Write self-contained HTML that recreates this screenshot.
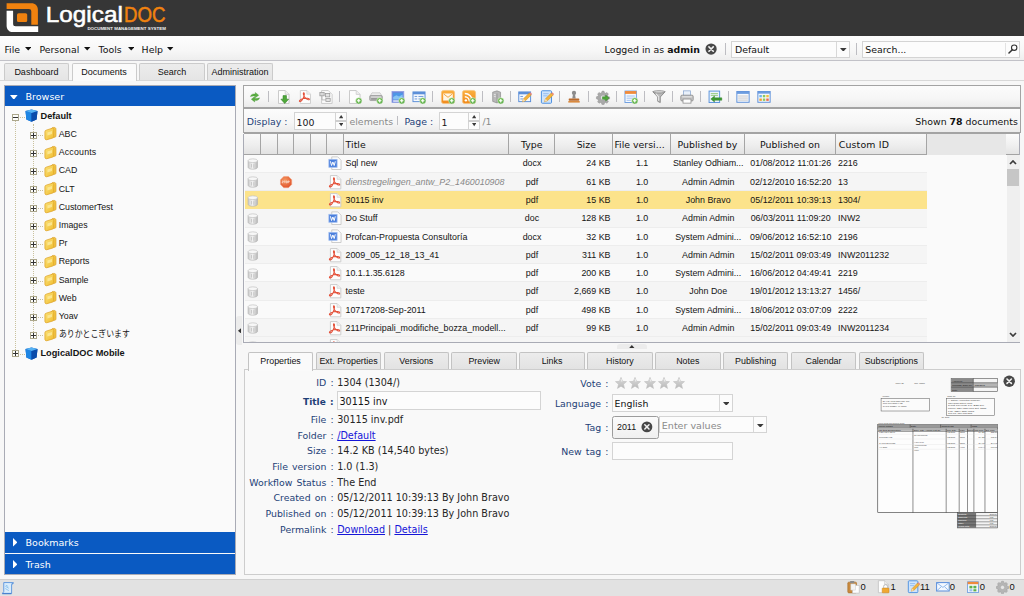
<!DOCTYPE html>
<html lang="en">
<head>
<meta charset="utf-8">
<title>LogicalDOC</title>
<style>
html,body{margin:0;padding:0;width:1024px;height:596px;overflow:hidden;background:#f7f7f7}
body{font-family:"Liberation Sans","Noto Sans CJK JP",sans-serif;font-size:8.9px;color:#141414;position:relative;line-height:1}
.v{font-family:"DejaVu Sans","Liberation Sans",sans-serif;font-size:9.4px}
.a{position:absolute;box-sizing:border-box}
svg{display:block}
svg.ic{position:absolute;width:13px;height:13px;overflow:visible}
/* header */
#hdr{left:0;top:0;width:1024px;height:37px;background:#363636;border-bottom:1px solid #b4b4b4}
#menubar{left:0;top:36.3px;width:1024px;height:24.4px;background:linear-gradient(#fdfdfd,#f7f7f7 60%,#eeeeee);border-bottom:1px solid #c2c2c8}
.mi{position:absolute;top:44.6px;white-space:nowrap;color:#111}
.tri{position:absolute;width:0;height:0;border-left:3.2px solid transparent;border-right:3.2px solid transparent;border-top:3.7px solid #111;top:47px}
/* top tabs */
.tab{position:absolute;box-sizing:border-box;top:63.4px;height:17px;border:1px solid #cbcbcb;border-bottom:none;border-radius:2px 2px 0 0;background:linear-gradient(#ececec,#e5e5e5);text-align:center;line-height:17px;font-size:9px;color:#111}
.tab.on{background:#fafafa;height:18px;z-index:2}
#tabline{left:0;top:80.2px;width:1024px;height:1px;background:#d8d8d8}
/* left panel */
#left{left:4px;top:85px;width:232px;height:490px;border:1px solid #a9abb5;background:#fafafa}
.sec{position:absolute;left:0;width:230px;background:#0a5ac2;color:#fff;height:20.4px}
.sec span{position:absolute;left:20.6px;top:6px;font-size:9.5px}
.tr{position:absolute;white-space:nowrap;font-size:8.8px}
.tr b{font-weight:bold;font-size:9.2px}
.sx{display:inline-block;transform:scaleX(.895);transform-origin:0 50%}
/* right */
.bar{border:1px solid #a3a3a3;background:linear-gradient(#fcfcfc,#f6f6f6 60%,#ebebeb)}
.sep{position:absolute;width:1px;background:#bdbdc2;height:11px;top:5.5px}
.blue{color:#1e3f77}
/* grid */
#ghead{left:244px;top:133px;width:776px;height:21.6px;border-top:1px solid #a3a3a3}
.hc{position:absolute;top:0;height:20.6px;border-right:1px solid #a5a5a5;border-bottom:1px solid #a3a3a3;background:linear-gradient(#f8f8f8,#eeeeee 55%,#e2e2e2);box-sizing:border-box;line-height:22px;white-space:nowrap;overflow:hidden;color:#111}
.row{position:absolute;left:244.5px;width:682.5px;height:18.27px;box-sizing:border-box;border-bottom:1px solid #ededed;background:#fafafa}
.row.sel{background:#fce38b;border-bottom-color:#fce38b}
.row.imm .t{color:#888;font-style:italic}
.row .c{position:absolute;top:4.9px;white-space:nowrap}
.row .db{left:2px;top:3.4px;width:11.8px;height:11.8px}
.row .st{left:35.2px;top:3.4px;width:12.2px;height:12.2px}
.row .fi{left:83.2px;top:1.8px;width:14.4px;height:14.4px}
.c.t{left:101px}
.c.ty{left:264.5px;width:46px;text-align:center}
.c.sz{left:310px;width:56px;text-align:right}
.c.fv{left:368.6px;width:58px;text-align:center}
.c.pb{left:426.7px;width:74px;text-align:center}
.c.po{left:500.7px;width:91px;text-align:center}
.c.ci{left:593.5px}
/* bottom tabs */
.bt{position:absolute;box-sizing:border-box;top:352px;height:17.5px;width:65.6px;border:1px solid #c3c3c3;border-bottom:none;border-radius:2px 2px 0 0;background:linear-gradient(#ececec,#e2e2e2);text-align:center;line-height:17px;color:#111}
.bt.on{background:#fafafa;height:18.5px;z-index:2}
#bpane{left:243.6px;top:369.4px;width:777px;height:206px;border:1px solid #cdcdcd;background:#f9f9f9}
.fl{position:absolute;width:90px;text-align:right;white-space:nowrap;color:#1e3f77;font-size:9.38px;word-spacing:1.1px}
.fl b{font-size:9px}
.fv2{position:absolute;white-space:nowrap;color:#262626;font-size:9.65px}
.inp{position:absolute;box-sizing:border-box;border:1px solid #d4d4d4;background:#fcfcfc}
a{color:#1515d8;text-decoration:underline}

.sec i.dn{position:absolute;left:5.2px;top:8.6px;border-left:3.8px solid transparent;border-right:3.8px solid transparent;border-top:4.6px solid #fff}
.sec i.rt{position:absolute;left:7.6px;top:6px;border-top:4.2px solid transparent;border-bottom:4.2px solid transparent;border-left:4.4px solid #fff}
.vdot{position:absolute;width:0;border-left:1px dotted #c9c19c}
.hdot{position:absolute;height:0;border-top:1px dotted #c9c19c}
.op{position:absolute;width:7px;height:7px;box-sizing:border-box;border:1px solid #aca78c;background:#fdfdfa}
.op i.h{position:absolute;left:0;top:2px;width:5px;height:1px;background:#333}
.op i.vv{position:absolute;left:2px;top:0;width:1px;height:5px;background:#333}
.row.alt{background:#f5f5f5}
.spb{position:absolute;right:0;top:0;bottom:0;width:12px;border-left:1px solid #d6d6d6}
.up{position:absolute;right:3.1px;top:2.2px;border-left:2.3px solid transparent;border-right:2.3px solid transparent;border-bottom:3.2px solid #333}
.dw{position:absolute;right:3.1px;bottom:2.2px;border-left:2.3px solid transparent;border-right:2.3px solid transparent;border-top:3.2px solid #333}
.spb:after{content:"";position:absolute;left:0;right:0;top:7.4px;height:1.4px;background:#d0d0d0}
.cbb{position:absolute;right:0;top:0;bottom:0;width:13.6px;border-left:1px solid #dcdcdc}
.cba{position:absolute;right:3.2px;top:6px;border-left:3.5px solid transparent;border-right:3.5px solid transparent;border-top:3.8px solid #333}
/* status */
#status{left:0;top:578.6px;width:1024px;height:17.4px;background:#e2e2e2;border-top:1px solid #d0d0d0}
.sn{position:absolute;top:582.2px;font-size:9.4px;color:#111}
</style>
</head>
<body>
<svg width="0" height="0" style="position:absolute">
<defs>
<linearGradient id="g-cyl" x1="0" x2="1" y1="0" y2="0"><stop offset="0" stop-color="#c9c9c9"/><stop offset=".45" stop-color="#f4f4f4"/><stop offset="1" stop-color="#b5b5b5"/></linearGradient>
<linearGradient id="g-fold" x1="0" x2="1" y1="0" y2="1"><stop offset="0" stop-color="#fbe27a"/><stop offset="1" stop-color="#f0bd30"/></linearGradient>
<linearGradient id="g-cubeL" x1="0" x2="1" y1="0" y2="1"><stop offset="0" stop-color="#3aa0ee"/><stop offset="1" stop-color="#0d55b8"/></linearGradient>
<radialGradient id="g-stop" cx=".4" cy=".35" r=".7"><stop offset="0" stop-color="#f59a63"/><stop offset="1" stop-color="#e0522a"/></radialGradient>
<radialGradient id="g-plus" cx=".4" cy=".35" r=".7"><stop offset="0" stop-color="#8fd36a"/><stop offset="1" stop-color="#3c9a2c"/></radialGradient>
<linearGradient id="g-or" x1="0" x2="0" y1="0" y2="1"><stop offset="0" stop-color="#fbb040"/><stop offset="1" stop-color="#f08a1d"/></linearGradient>
<linearGradient id="g-star" x1="0" x2="0" y1="0" y2="1"><stop offset="0" stop-color="#dcdcdc"/><stop offset="1" stop-color="#b9b9b9"/></linearGradient>
<g id="plus"><circle cx="10" cy="10" r="2.900" fill="url(#g-plus)" stroke="#e2f2d8" stroke-width=".5"/><path d="M8.400 10h3.200M10 8.400v3.200" stroke="#fff" stroke-width="1.100"/></g>
<g id="page"><path d="M1.400 .5h6.200l3.600 3.600v8.400H1.400z" fill="#fdfdfd" stroke="#c2c2c2" stroke-width=".8"/><path d="M7.600 .5v3.600h3.600" fill="#efefef" stroke="#c2c2c2" stroke-width=".6"/></g>
<g id="i-db"><path d="M1.2 3v7.2c0 1.3 2.3 2.2 5.2 2.2s5.2-.9 5.2-2.2V3z" fill="url(#g-cyl)" stroke="#b3b3b3" stroke-width=".7"/><ellipse cx="6.4" cy="3" rx="5.2" ry="2.1" fill="#f7f7f7" stroke="#bdbdbd" stroke-width=".7"/><path d="M5 6.5v4M7.5 6.8v4" stroke="#bbb" stroke-width=".8"/></g>
<g id="i-stop"><path d="M4 .5h5L12.5 4v5L9 12.5H4L.5 9V4z" fill="url(#g-stop)" stroke="#f2a27e" stroke-width=".6"/><path d="M2.3 5.3h1.2v1H2.3v1h1.2M4.4 5.3h1.4M5.1 5.3v2.3M6.5 5.3h1.2v2H6.5zM8.6 7.6V5.3h1.2v1.1H8.6" fill="none" stroke="#fde9dd" stroke-width=".7"/></g>
<g id="i-word"><path d="M3.4 .8h5.4l3 3v8.4H3.4z" fill="#fdfdfd" stroke="#c6c6c6" stroke-width=".8"/><rect x=".8" y="3" width="7.4" height="7.2" fill="#4a7fdc" stroke="#9fbdf0" stroke-width=".7"/><path d="M2.2 4.8l1 3.8 1.2-3.2 1.2 3.2 1-3.8" fill="none" stroke="#fff" stroke-width=".9"/></g>
<g id="i-pdf"><path d="M2.200 .5h6l3.400 3.400v8.600H2.200z" fill="#fdfdfd" stroke="#c9c9c9" stroke-width=".8"/><path d="M8.200 .5v3.400h3.400" fill="#f0f0f0" stroke="#c9c9c9" stroke-width=".5"/><path d="M5.3 2.6c.9 0 .7 2.4-.3 4.6C4 9.400 2.400 11 1.500 10.600c-.8-.5.700-2 3.500-2.600s5.600-.3 5.600.7c0 .9-2.500.2-4-1.500S4.500 2.600 5.300 2.600z" fill="none" stroke="#e4513a" stroke-width=".95" stroke-linejoin="round"/></g>
<g id="i-folder"><path d="M7.200 2.400c.2-1.600 1.200-2 2.600-2 1.500 0 2.200.6 2.200 2v7.200l-2.200 1z" fill="#f3c748" stroke="#d79a1e" stroke-width=".6"/><path d="M.9 4.800c0-.9.400-1.300 1.200-1.600l6.200-2c.9-.3 1.500.2 1.500 1.100v7.400c0 .7-.3 1.100-1 1.300l-5.800 1.700c-1.200.3-2.100-.3-2.100-1.500z" fill="url(#g-fold)" stroke="#dc9f1f" stroke-width=".7"/><path d="M3.400 5.400l4.600-1.500v3.200l-4.600 1.400z" fill="#fdf0a8" opacity=".7"/></g>
<g id="i-cube"><path d="M6.500 .4l6 1.700-.9 8.400-5.100 2.300-5.100-2.300L.5 2.100z" fill="#0d59bd"/><path d="M.5 2.100l6 1.800v8.900l-5.100-2.300z" fill="#1f86e4"/><path d="M6.500 3.900l6-1.800-.9 8.400-5.100 2.300z" fill="#0b4cab"/><path d="M.5 2.100l6-1.700 6 1.700-6 1.800z" fill="#55b2f4"/></g>
<g id="i-close"><circle cx="6.500" cy="6.500" r="6" fill="#484848"/><path d="M4.200 4.200l4.600 4.600M8.800 4.200l-4.600 4.600" stroke="#f2f2f2" stroke-width="1.700" stroke-linecap="round"/></g>
<g id="i-star"><path d="M6.500 .4l1.700 4.300 4.300.3-3.300 2.900 1.100 4.500-3.800-2.500-3.800 2.500 1.100-4.500L.5 5l4.300-.3z" fill="url(#g-star)" stroke="#bdbdbd" stroke-width=".6"/><path d="M6.500 2.200l1 2.900" stroke="#f4f4f4" stroke-width=".8" fill="none"/></g>
<g id="t-refresh" transform="translate(1.300 1.500) scale(.8)"><path d="M1.200 5.800C1.800 3.200 4 2.300 6.800 2.900V1l4 3.200-4 3V5.200C4.600 4.800 3.200 5 1.200 5.800z" fill="#5cb043" stroke="#3f8f2c" stroke-width=".4"/><path d="M11.800 7.200C11.200 9.800 9 10.700 6.200 10.100V12l-4-3.200 4-3V7.800C8.400 8.200 9.800 8 11.800 7.200z" fill="#5cb043" stroke="#3f8f2c" stroke-width=".4"/></g>
<g id="t-down"><use href="#page"/><path d="M5.600 5.200h3.200v3.300h2L7.200 12.600 3.600 8.500h2z" fill="#4fa83a" stroke="#2f7d22" stroke-width=".5"/></g>
<g id="t-copy"><path d="M2.400 .5h6.200l3.600 3.600v8.400H2.400z" fill="#fbfbfb" stroke="#c6c6c6" stroke-width=".8"/><rect x=".8" y="2.200" width="4" height="3.200" fill="#d9d9d9" stroke="#9a9a9a" stroke-width=".7"/><rect x="6" y="3.200" width="4" height="3.200" fill="#e4e4e4" stroke="#9a9a9a" stroke-width=".7"/><rect x="6.400" y="7.800" width="4" height="2.800" fill="#e4e4e4" stroke="#9a9a9a" stroke-width=".7"/><path d="M2.800 5.400v3.800h3.600" fill="none" stroke="#aaa" stroke-width=".7"/></g>
<g id="t-newdoc"><use href="#page"/><use href="#plus"/></g>
<g id="t-scan"><path d="M1.200 5.200l1.600-2.600h7.400l1.600 2.600z" fill="#ededed" stroke="#b0b0b0" stroke-width=".5"/><rect x=".6" y="5.200" width="11.800" height="4.600" rx=".9" fill="#b9b9b9" stroke="#8f8f8f" stroke-width=".6"/><path d="M1.800 6.500h9.400" stroke="#e6e6e6" stroke-width=".9"/><path d="M2 8.300h7" stroke="#777" stroke-width=".8"/><use href="#plus"/></g>
<g id="t-win"><rect x=".9" y="1.300" width="11" height="10.400" fill="#6d86da" stroke="#8f9fe4" stroke-width=".7"/><rect x="2" y="2.600" width="8.800" height="6.200" fill="#4d97e6"/><path d="M2 6.400l3-1.500 2.500 1.200 3.300-1.900v4.600H2z" fill="#86c4f4"/><rect x="2" y="9.600" width="8.800" height="1.300" fill="#e8eefb"/><use href="#plus"/></g>
<g id="t-form"><rect x=".9" y="1.800" width="11.200" height="9" fill="#f4f8fd" stroke="#5c8fd8" stroke-width=".9"/><rect x=".9" y="1.800" width="11.200" height="2.200" fill="#5c8fd8"/><path d="M2.400 6h2.400M6 6h4.600M2.400 8.300h2.400M6 8.300h3" stroke="#6f9ad8" stroke-width=".9"/><use href="#plus"/></g>
<g id="t-mail"><rect x=".4" y=".4" width="12.200" height="12.200" rx="2" fill="url(#g-or)" stroke="#f6c37c" stroke-width=".7"/><rect x="2.400" y="3.600" width="8.200" height="5.800" fill="#fff6e6" stroke="#fff" stroke-width=".5"/><path d="M2.400 3.600l4.100 3.200 4.100-3.200" fill="none" stroke="#f09a2b" stroke-width=".8"/><use href="#plus"/></g>
<g id="t-rss"><rect x=".4" y=".4" width="12.200" height="12.200" rx="2" fill="url(#g-or)" stroke="#f6c37c" stroke-width=".7"/><circle cx="3.600" cy="9.600" r="1.100" fill="#fff"/><path d="M2.600 6.200a4.200 4.200 0 0 1 4.200 4.200M2.600 3.300a7.100 7.100 0 0 1 7.100 7.100" fill="none" stroke="#fff" stroke-width="1.300"/><use href="#plus"/></g>
<g id="t-server"><path d="M2.500 2l4-1.200 3.300 1.200v8.600l-3.300 1.400-4-1.400z" fill="#b9b9b9" stroke="#858585" stroke-width=".6"/><path d="M6.500 3.200v8.800" stroke="#8d8d8d" stroke-width=".6"/><path d="M3.500 4l2 .5M3.500 5.800l2 .5" stroke="#eee" stroke-width=".7"/><use href="#plus"/></g>
<g id="pencil"><path d="M4.200 10.900l.9-2.700 5.400-5.400 1.800 1.800-5.400 5.400z" fill="#f3b33d" stroke="#c98a1e" stroke-width=".5"/><path d="M4.200 10.900l.9-2.700 1.800 1.800z" fill="#f6deb4"/><path d="M10.500 2.800l.8-.8 1.800 1.800-.8.800z" fill="#e98080"/></g>
<g id="t-formedit"><rect x=".7" y="1.800" width="11" height="9" fill="#f4f8fd" stroke="#5c8fd8" stroke-width=".9"/><rect x=".7" y="1.800" width="11" height="2.200" fill="#5c8fd8"/><path d="M2.200 6h2.400M2.200 8.300h2.400" stroke="#6f9ad8" stroke-width=".9"/><use href="#pencil"/></g>
<g id="t-docedit"><rect x="1.300" y=".7" width="9.400" height="11.600" rx=".8" fill="#cfe4fb" stroke="#4b8fe0" stroke-width=".9"/><path d="M3 3.400h5M3 5.400h4" stroke="#8db8ee" stroke-width=".8"/><use href="#pencil"/></g>
<g id="t-stamp"><circle cx="6.500" cy="2.800" r="2" fill="#8c8c8c"/><path d="M5.500 4.300h2l.6 3.700H4.900z" fill="#8c8c8c"/><rect x="1.600" y="7.800" width="9.800" height="2.200" rx=".6" fill="#b96a2c"/><rect x="1.200" y="10.200" width="10.600" height="1.500" fill="#d98a3f"/></g>
<g id="t-gear"><path d="M6.500 1l1 .1.400 1.400 1 .5 1.300-.7 1.300 1.400-.7 1.300.4 1 1.400.4v1.900l-1.400.4-.4 1 .7 1.300-1.400 1.300-1.200-.7-1 .4-.4 1.400H5.500l-.4-1.400-1-.4-1.300.7-1.300-1.400.7-1.200-.5-1L.4 8.200V6.300l1.400-.4.400-1-.7-1.300 1.400-1.300 1.200.7 1-.5.500-1.400z" fill="#a9a9a9" stroke="#8a8a8a" stroke-width=".4"/><circle cx="6.500" cy="7.200" r="2" fill="#e9e9e9"/><path d="M6 6.300h3v-1.600l3.200 2.800L9 10.300V8.700H6z" fill="#4fa83a" stroke="#2f7d22" stroke-width=".4"/></g>
<g id="t-cal"><rect x=".9" y="1" width="10.600" height="10.600" fill="#f7fafe" stroke="#6f9fe0" stroke-width=".9"/><rect x=".9" y="1" width="10.600" height="2.600" fill="#f08a3a"/><path d="M2.400 5.600h7.600M2.400 7.600h7.600M2.400 9.600h4" stroke="#9ec0ee" stroke-width=".9"/><use href="#plus"/></g>
<g id="t-funnel"><path d="M.8 1.600h11.400L7.700 6.500v5.200l-2.400-1.200V6.500z" fill="#b9b9b9" stroke="#7a7a7a" stroke-width=".7"/><path d="M3.600 3.400l2.600 3v3.600" stroke="#ececec" stroke-width="1" fill="none"/><ellipse cx="6.500" cy="1.700" rx="5.600" ry="1.100" fill="#d9d9d9" stroke="#777" stroke-width=".6"/></g>
<g id="t-print"><rect x="3.200" y=".8" width="6.600" height="4.600" fill="#e9f1fb" stroke="#8aa7d0" stroke-width=".7"/><rect x=".7" y="4.800" width="11.600" height="5.400" rx="1.200" fill="#c4c4c4" stroke="#8a8a8a" stroke-width=".7"/><rect x="2.800" y="8.400" width="7.400" height="3.800" fill="#fdfdfd" stroke="#8a8a8a" stroke-width=".7"/><path d="M2 6.300h9" stroke="#eee" stroke-width=".8"/></g>
<g id="t-export"><rect x="1" y="1" width="9.800" height="10.600" fill="#eaf3fd" stroke="#5c94dc" stroke-width=".9"/><path d="M2.600 3.200h6.600M2.600 5h6.600" stroke="#9fd08f" stroke-width="1"/><path d="M12.800 7.300H6V5.600L2.600 8.400 6 11.200V9.500h6.800z" fill="#3e9a33" stroke="#2a7a22" stroke-width=".4"/></g>
<g id="t-list"><rect x=".8" y="1.400" width="11.400" height="10" fill="#f6f9fe" stroke="#5c8fd8" stroke-width=".9"/><rect x=".8" y="1.400" width="11.400" height="2.200" fill="#6c9ce0"/><path d="M2 5.600h9M2 7.500h9M2 9.400h9" stroke="#c9c9c9" stroke-width=".9"/></g>
<g id="t-gallery"><rect x=".8" y="1.400" width="11.400" height="10" fill="#f6f9fe" stroke="#5c8fd8" stroke-width=".9"/><rect x=".8" y="1.400" width="11.400" height="2" fill="#6c9ce0"/><rect x="2.200" y="4.600" width="2.300" height="2.200" fill="#6fb6e8"/><rect x="5.400" y="4.600" width="2.300" height="2.200" fill="#8cc860"/><rect x="8.600" y="4.600" width="2.300" height="2.200" fill="#f0c040"/><rect x="2.200" y="7.900" width="2.300" height="2.200" fill="#f0a030"/><rect x="5.400" y="7.900" width="2.300" height="2.200" fill="#8cc860"/><rect x="8.600" y="7.900" width="2.300" height="2.200" fill="#e86a50"/></g>

</defs>
</svg>

<!-- HEADER -->
<div id="hdr" class="a">
<svg class="a" style="left:0;top:0" width="180" height="36" viewBox="0 0 180 36">
<path d="M6.600 3.300h24.800c3.800 0 6.500 2.600 6.500 6.400v15h-6.600V11.600c0-1.700-.8-2.500-2.500-2.500H6.600z" fill="#f0820f"/>
<path d="M6.600 10.800h6.500v12.900c0 1.700.8 2.500 2.500 2.500h22.600v5.900H13c-3.800 0-6.400-2.600-6.400-6.400z" fill="#fff"/>
<rect x="17" y="13.200" width="10.200" height="8.800" rx="1.600" fill="#f0820f"/>
<text x="45.800" y="22" font-family="Liberation Sans, sans-serif" font-size="22.600" fill="#fff" stroke="#fff" stroke-width=".55" textLength="77" lengthAdjust="spacingAndGlyphs">Logical</text>
<text x="124" y="22" font-family="Liberation Sans, sans-serif" font-size="22.600" fill="#f0820f" stroke="#f0820f" stroke-width=".55" textLength="41.500" lengthAdjust="spacingAndGlyphs">DOC</text>
<text x="87.400" y="29.700" font-family="Liberation Sans, sans-serif" font-size="3.900" font-weight="bold" fill="#f2f2f2" textLength="78.500" lengthAdjust="spacingAndGlyphs">DOCUMENT MANAGEMENT SYSTEM</text>
</svg>

</div>

<!-- MENUBAR -->
<div id="menubar" class="a"></div>
<div class="mi v" style="left:4.4px">File</div><svg class="a" style="left:24.8px;top:47.2px;" width="6.4" height="3.6" viewBox="0 0 10 10" preserveAspectRatio="none"><path d="M0 0h10L5 10z" fill="#111"/></svg>
<div class="mi v" style="left:39.4px">Personal</div><svg class="a" style="left:84.2px;top:47.2px;" width="6.4" height="3.6" viewBox="0 0 10 10" preserveAspectRatio="none"><path d="M0 0h10L5 10z" fill="#111"/></svg>
<div class="mi v" style="left:98.6px">Tools</div><svg class="a" style="left:127.6px;top:47.2px;" width="6.4" height="3.6" viewBox="0 0 10 10" preserveAspectRatio="none"><path d="M0 0h10L5 10z" fill="#111"/></svg>
<div class="mi v" style="left:141.6px">Help</div><svg class="a" style="left:167.2px;top:47.2px;" width="6.4" height="3.6" viewBox="0 0 10 10" preserveAspectRatio="none"><path d="M0 0h10L5 10z" fill="#111"/></svg>
<div class="mi v" style="left:604.6px">Logged in as <b>admin</b></div>
<svg class="ic " style="left:705.4px;top:42.8px;width:12.2px;height:12.2px" viewBox="0 0 13 13"><use href="#i-close"/></svg>
<div class="sep" style="left:725.2px;top:42.6px;height:12.6px"></div>
<div class="inp" style="left:731.4px;top:40.6px;width:118.6px;height:17px"><span class="v" style="position:absolute;left:2.6px;top:3.6px;color:#111;font-size:9.4px">Default</span><i style="position:absolute;left:103.39999999999999px;top:0;bottom:0;width:1px;background:#d8d8d8"></i><svg class="a" style="left:107.59999999999998px;top:6.2px;" width="6.6" height="3.7" viewBox="0 0 10 10" preserveAspectRatio="none"><path d="M0 0h10L5 10z" fill="#3a3a3a"/></svg></div>
<div class="sep" style="left:855.6px;top:42.6px;height:12.6px"></div>
<div class="inp" style="left:862px;top:40.6px;width:158.4px;height:17px"><span class="v" style="position:absolute;left:2.2px;top:3.6px">Search...</span><i style="position:absolute;right:13.4px;top:1px;bottom:1px;width:1px;background:#e2e2e2"></i><svg style="position:absolute;right:1.6px;top:2.800px" width="10" height="10" viewBox="0 0 10 10"><circle cx="6.200" cy="3.700" r="2.700" fill="#fff" stroke="#333" stroke-width="1.100"/><path d="M4.300 5.700L1 9" stroke="#333" stroke-width="1.500" stroke-linecap="round"/></svg></div>

<!-- TOP TABS -->
<div class="tab" style="left:3.6px;width:65.6px">Dashboard</div>
<div class="tab on" style="left:71.6px;width:65px">Documents</div>
<div class="tab" style="left:139.4px;width:65.4px">Search</div>
<div class="tab" style="left:207.2px;width:65.6px">Administration</div>
<div id="tabline" class="a"></div>

<!-- LEFT PANEL -->
<div id="left" class="a">
<div class="sec" style="top:0"><svg class="a" style="left:5.4px;top:8.6px;" width="7.6" height="4.8" viewBox="0 0 10 10" preserveAspectRatio="none"><path d="M0 0h10L5 10z" fill="#fff"/></svg><span class="v">Browser</span></div>
<div class="vdot" style="left:10.3px;top:34px;height:232px"></div>
<div class="vdot" style="left:28.299999999999997px;top:38px;height:210px"></div>
<div class="op" style="left:6.8px;top:27.8px"><i class="h"></i></div>
<div class="hdot" style="left:14.5px;top:31.099999999999994px;width:5px"></div>
<svg class="ic " style="left:20px;top:23.3px;width:13px;height:13px" viewBox="0 0 13 13"><use href="#i-cube"/></svg>
<div class="tr" style="left:35.5px;top:26.0px"><b>Default</b></div>
<div class="op" style="left:24.8px;top:45.6px"><i class="h"></i><i class="vv"></i></div>
<div class="hdot" style="left:32.5px;top:48.90000000000001px;width:5px"></div>
<svg class="ic " style="left:39px;top:41.3px;width:13px;height:13px" viewBox="0 0 13 13"><use href="#i-folder"/></svg>
<div class="tr" style="left:53.7px;top:43.9px">ABC</div>
<div class="op" style="left:24.8px;top:63.8px"><i class="h"></i><i class="vv"></i></div>
<div class="hdot" style="left:32.5px;top:67.12px;width:5px"></div>
<svg class="ic " style="left:39px;top:59.5px;width:13px;height:13px" viewBox="0 0 13 13"><use href="#i-folder"/></svg>
<div class="tr" style="left:53.7px;top:62.1px"><span style='letter-spacing:.2px'>Accounts</span></div>
<div class="op" style="left:24.8px;top:82.0px"><i class="h"></i><i class="vv"></i></div>
<div class="hdot" style="left:32.5px;top:85.34px;width:5px"></div>
<svg class="ic " style="left:39px;top:77.7px;width:13px;height:13px" viewBox="0 0 13 13"><use href="#i-folder"/></svg>
<div class="tr" style="left:53.7px;top:80.3px">CAD</div>
<div class="op" style="left:24.8px;top:100.3px"><i class="h"></i><i class="vv"></i></div>
<div class="hdot" style="left:32.5px;top:103.56px;width:5px"></div>
<svg class="ic " style="left:39px;top:96.0px;width:13px;height:13px" viewBox="0 0 13 13"><use href="#i-folder"/></svg>
<div class="tr" style="left:53.7px;top:98.6px">CLT</div>
<div class="op" style="left:24.8px;top:118.5px"><i class="h"></i><i class="vv"></i></div>
<div class="hdot" style="left:32.5px;top:121.78px;width:5px"></div>
<svg class="ic " style="left:39px;top:114.2px;width:13px;height:13px" viewBox="0 0 13 13"><use href="#i-folder"/></svg>
<div class="tr" style="left:53.7px;top:116.8px">CustomerTest</div>
<div class="op" style="left:24.8px;top:136.7px"><i class="h"></i><i class="vv"></i></div>
<div class="hdot" style="left:32.5px;top:140.0px;width:5px"></div>
<svg class="ic " style="left:39px;top:132.4px;width:13px;height:13px" viewBox="0 0 13 13"><use href="#i-folder"/></svg>
<div class="tr" style="left:53.7px;top:135.0px">Images</div>
<div class="op" style="left:24.8px;top:154.9px"><i class="h"></i><i class="vv"></i></div>
<div class="hdot" style="left:32.5px;top:158.22px;width:5px"></div>
<svg class="ic " style="left:39px;top:150.6px;width:13px;height:13px" viewBox="0 0 13 13"><use href="#i-folder"/></svg>
<div class="tr" style="left:53.7px;top:153.2px">Pr</div>
<div class="op" style="left:24.8px;top:173.1px"><i class="h"></i><i class="vv"></i></div>
<div class="hdot" style="left:32.5px;top:176.44000000000003px;width:5px"></div>
<svg class="ic " style="left:39px;top:168.8px;width:13px;height:13px" viewBox="0 0 13 13"><use href="#i-folder"/></svg>
<div class="tr" style="left:53.7px;top:171.4px">Reports</div>
<div class="op" style="left:24.8px;top:191.4px"><i class="h"></i><i class="vv"></i></div>
<div class="hdot" style="left:32.5px;top:194.66px;width:5px"></div>
<svg class="ic " style="left:39px;top:187.1px;width:13px;height:13px" viewBox="0 0 13 13"><use href="#i-folder"/></svg>
<div class="tr" style="left:53.7px;top:189.7px">Sample</div>
<div class="op" style="left:24.8px;top:209.6px"><i class="h"></i><i class="vv"></i></div>
<div class="hdot" style="left:32.5px;top:212.87999999999997px;width:5px"></div>
<svg class="ic " style="left:39px;top:205.3px;width:13px;height:13px" viewBox="0 0 13 13"><use href="#i-folder"/></svg>
<div class="tr" style="left:53.7px;top:207.9px">Web</div>
<div class="op" style="left:24.8px;top:227.8px"><i class="h"></i><i class="vv"></i></div>
<div class="hdot" style="left:32.5px;top:231.1px;width:5px"></div>
<svg class="ic " style="left:39px;top:223.5px;width:13px;height:13px" viewBox="0 0 13 13"><use href="#i-folder"/></svg>
<div class="tr" style="left:53.7px;top:226.1px">Yoav</div>
<div class="op" style="left:24.8px;top:246.0px"><i class="h"></i><i class="vv"></i></div>
<div class="hdot" style="left:32.5px;top:249.32000000000002px;width:5px"></div>
<svg class="ic " style="left:39px;top:241.7px;width:13px;height:13px" viewBox="0 0 13 13"><use href="#i-folder"/></svg>
<div class="tr" style="left:53.7px;top:244.3px"><span class=sx>ありかとこぎいます</span></div>
<div class="op" style="left:6.8px;top:264.3px"><i class="h"></i><i class="vv"></i></div>
<div class="hdot" style="left:14.5px;top:267.6px;width:5px"></div>
<svg class="ic " style="left:20px;top:260.5px;width:13px;height:13px" viewBox="0 0 13 13"><use href="#i-cube"/></svg>
<div class="tr" style="left:35.5px;top:262.5px"><b>LogicalDOC Mobile</b></div>
<div class="sec" style="top:446.20000000000005px"><svg class="a" style="left:7.6px;top:5.8px;" width="4.4" height="8.6" viewBox="0 0 10 10" preserveAspectRatio="none"><path d="M0 0v10l10-5z" fill="#fff"/></svg><span class="v">Bookmarks</span></div>
<div class="sec" style="top:468px"><svg class="a" style="left:7.6px;top:5.8px;" width="4.4" height="8.6" viewBox="0 0 10 10" preserveAspectRatio="none"><path d="M0 0v10l10-5z" fill="#fff"/></svg><span class="v">Trash</span></div>
</div>

<!-- RIGHT PANEL -->
<div class="a bar" id="tb" style="left:243px;top:85px;width:778px;height:23px"></div>
<svg class="ic " style="left:247.6px;top:90px;width:14px;height:14px" viewBox="0 0 13 13"><use href="#t-refresh"/></svg>
<div class="sep" style="left:268.0px;top:91.3px"></div>
<svg class="ic " style="left:276.5px;top:90px;width:14px;height:14px" viewBox="0 0 13 13"><use href="#t-down"/></svg>
<svg class="ic " style="left:297.5px;top:90px;width:14px;height:14px" viewBox="0 0 13 13"><use href="#i-pdf"/></svg>
<svg class="ic " style="left:319px;top:90px;width:14px;height:14px" viewBox="0 0 13 13"><use href="#t-copy"/></svg>
<div class="sep" style="left:339.2px;top:91.3px"></div>
<svg class="ic " style="left:347.7px;top:90px;width:14px;height:14px" viewBox="0 0 13 13"><use href="#t-newdoc"/></svg>
<svg class="ic " style="left:368.8px;top:90px;width:14px;height:14px" viewBox="0 0 13 13"><use href="#t-scan"/></svg>
<svg class="ic " style="left:390.5px;top:90px;width:14px;height:14px" viewBox="0 0 13 13"><use href="#t-win"/></svg>
<svg class="ic " style="left:411.5px;top:90px;width:14px;height:14px" viewBox="0 0 13 13"><use href="#t-form"/></svg>
<div class="sep" style="left:431.9px;top:91.3px"></div>
<svg class="ic " style="left:440.5px;top:90px;width:14px;height:14px" viewBox="0 0 13 13"><use href="#t-mail"/></svg>
<svg class="ic " style="left:461.5px;top:90px;width:14px;height:14px" viewBox="0 0 13 13"><use href="#t-rss"/></svg>
<div class="sep" style="left:481.5px;top:91.3px"></div>
<svg class="ic " style="left:490px;top:90px;width:14px;height:14px" viewBox="0 0 13 13"><use href="#t-server"/></svg>
<div class="sep" style="left:509.8px;top:91.3px"></div>
<svg class="ic " style="left:517.5px;top:90px;width:14px;height:14px" viewBox="0 0 13 13"><use href="#t-formedit"/></svg>
<svg class="ic " style="left:539.6px;top:90px;width:14px;height:14px" viewBox="0 0 13 13"><use href="#t-docedit"/></svg>
<div class="sep" style="left:559.0px;top:91.3px"></div>
<svg class="ic " style="left:567.3px;top:90px;width:14px;height:14px" viewBox="0 0 13 13"><use href="#t-stamp"/></svg>
<div class="sep" style="left:587.5px;top:91.3px"></div>
<svg class="ic " style="left:595.7px;top:90px;width:14px;height:14px" viewBox="0 0 13 13"><use href="#t-gear"/></svg>
<div class="sep" style="left:616.3px;top:91.3px"></div>
<svg class="ic " style="left:624px;top:90px;width:14px;height:14px" viewBox="0 0 13 13"><use href="#t-cal"/></svg>
<div class="sep" style="left:643.8px;top:91.3px"></div>
<svg class="ic " style="left:652px;top:90px;width:14px;height:14px" viewBox="0 0 13 13"><use href="#t-funnel"/></svg>
<div class="sep" style="left:671.7px;top:91.3px"></div>
<svg class="ic " style="left:680px;top:90px;width:14px;height:14px" viewBox="0 0 13 13"><use href="#t-print"/></svg>
<div class="sep" style="left:700.0px;top:91.3px"></div>
<svg class="ic " style="left:708px;top:90px;width:14px;height:14px" viewBox="0 0 13 13"><use href="#t-export"/></svg>
<div class="sep" style="left:728.4px;top:91.3px"></div>
<svg class="ic " style="left:736px;top:90px;width:14px;height:14px" viewBox="0 0 13 13"><use href="#t-list"/></svg>
<svg class="ic " style="left:757.3px;top:90px;width:14px;height:14px" viewBox="0 0 13 13"><use href="#t-gallery"/></svg>
<div class="a bar" id="pg" style="left:243px;top:108px;width:778px;height:25px"></div>
<div class="a v blue" style="left:246.8px;top:117.2px">Display :</div>
<div class="inp" style="left:294.2px;top:112.2px;width:52.5px;height:17.4px"><span class="v" style="position:absolute;left:1.4px;top:4.6px">100</span><i style="position:absolute;left:39.9px;top:0;bottom:0;width:1px;background:#d4d4d4"></i><i style="position:absolute;left:39.9px;right:0;top:7.3px;height:1.5px;background:#cfcfcf"></i><svg class="a" style="left:43.5px;top:2.2px;" width="4.4" height="3.3" viewBox="0 0 10 10" preserveAspectRatio="none"><path d="M0 10h10L5 0z" fill="#3a3a3a"/></svg><svg class="a" style="left:43.5px;top:10.2px;" width="4.4" height="3.3" viewBox="0 0 10 10" preserveAspectRatio="none"><path d="M0 0h10L5 10z" fill="#3a3a3a"/></svg></div>
<div class="a v" style="left:349.5px;top:117.2px;color:#8a8a8a">elements</div>
<div class="sep" style="left:397px;top:116px;height:9px"></div>
<div class="a v blue" style="left:404.4px;top:117.2px">Page :</div>
<div class="inp" style="left:439.2px;top:112.2px;width:40.5px;height:17.4px"><span class="v" style="position:absolute;left:1.4px;top:4.6px">1</span><i style="position:absolute;left:27.9px;top:0;bottom:0;width:1px;background:#d4d4d4"></i><i style="position:absolute;left:27.9px;right:0;top:7.3px;height:1.5px;background:#cfcfcf"></i><svg class="a" style="left:31.5px;top:2.2px;" width="4.4" height="3.3" viewBox="0 0 10 10" preserveAspectRatio="none"><path d="M0 10h10L5 0z" fill="#3a3a3a"/></svg><svg class="a" style="left:31.5px;top:10.2px;" width="4.4" height="3.3" viewBox="0 0 10 10" preserveAspectRatio="none"><path d="M0 0h10L5 10z" fill="#3a3a3a"/></svg></div>
<div class="a v" style="left:482.4px;top:117.2px;color:#8a8a8a">/1</div>
<div class="a v" style="left:800px;width:217.8px;text-align:right;top:117.2px;color:#111">Shown <b>78</b> documents</div>
<div class="a" style="left:236.4px;top:316px;width:6px;height:29px;background:#ececec;border-radius:3px 0 0 3px"></div><svg class="a" style="left:237.6px;top:327.8px;" width="3.2" height="5.6" viewBox="0 0 10 10" preserveAspectRatio="none"><path d="M10 0v10L0 5z" fill="#333"/></svg>
<div class="a" style="left:617px;top:343.6px;width:30px;height:5.4px;background:#ececec;border-radius:3px 3px 0 0"></div><svg class="a" style="left:629.3px;top:345px;" width="5.6" height="3.2" viewBox="0 0 10 10" preserveAspectRatio="none"><path d="M0 10h10L5 0z" fill="#333"/></svg>

<!-- GRID -->
<div id="ghead" class="a v">
<div class="hc" style="left:0.0px;width:16.8px;text-align:center"></div>
<div class="hc" style="left:16.8px;width:16.8px;text-align:center"></div>
<div class="hc" style="left:33.6px;width:16.8px;text-align:center"></div>
<div class="hc" style="left:50.4px;width:16.4px;text-align:center"></div>
<div class="hc" style="left:66.8px;width:16.6px;text-align:center"></div>
<div class="hc" style="left:83.4px;width:16.4px;text-align:center"></div>
<div class="hc" style="left:99.8px;width:165.6px;padding-left:1.8px">Title</div>
<div class="hc" style="left:265.4px;width:45.6px;text-align:center">Type</div>
<div class="hc" style="left:311.0px;width:57.6px;text-align:center;padding-left:6px">Size</div>
<div class="hc" style="left:368.6px;width:58.2px;padding-left:1.8px">File versi...</div>
<div class="hc" style="left:426.8px;width:74.2px;text-align:center">Published by</div>
<div class="hc" style="left:501.0px;width:91.0px;text-align:center">Published on</div>
<div class="hc" style="left:592.0px;width:91.2px;padding-left:2.8px;letter-spacing:.15px">Custom ID</div>
<div class="a" style="left:683.2px;top:0;width:79.2px;height:20.6px;background:#e7e7e7"></div>
<div class="a" style="left:762.4px;top:0;width:13.6px;height:20.6px;background:linear-gradient(#fbfbfb,#f0f0f0 55%,#e4e4e4);border-bottom:1px solid #a3a3a3"></div>
</div>
<div class="a" style="left:244px;top:154.600px;width:763px;height:187.400px;background:#fafafa"></div>
<div class="row" style="top:154.60px"><svg class="ic db" viewBox="0 0 13 13"><use href="#i-db"/></svg><svg class="ic fi" viewBox="0 0 13 13"><use href="#i-word"/></svg><span class="c t">Sql new</span><span class="c ty">docx</span><span class="c sz">24 KB</span><span class="c fv">1.1</span><span class="c pb">Stanley Odhiam...</span><span class="c po">01/08/2012 11:01:26</span><span class="c ci">2216</span></div>
<div class="row imm alt" style="top:172.87px"><svg class="ic db" viewBox="0 0 13 13"><use href="#i-db"/></svg><svg class="ic st" viewBox="0 0 13 13"><use href="#i-stop"/></svg><svg class="ic fi" viewBox="0 0 13 13"><use href="#i-pdf"/></svg><span class="c t">dienstregelingen_antw_P2_1460010908</span><span class="c ty">pdf</span><span class="c sz">61 KB</span><span class="c fv">1.0</span><span class="c pb">Admin Admin</span><span class="c po">02/12/2010 16:52:20</span><span class="c ci">13</span></div>
<div class="row sel" style="top:191.14px"><svg class="ic db" viewBox="0 0 13 13"><use href="#i-db"/></svg><svg class="ic fi" viewBox="0 0 13 13"><use href="#i-pdf"/></svg><span class="c t">30115 inv</span><span class="c ty">pdf</span><span class="c sz">15 KB</span><span class="c fv">1.0</span><span class="c pb">John Bravo</span><span class="c po">05/12/2011 10:39:13</span><span class="c ci">1304/</span></div>
<div class="row alt" style="top:209.41px"><svg class="ic db" viewBox="0 0 13 13"><use href="#i-db"/></svg><svg class="ic fi" viewBox="0 0 13 13"><use href="#i-word"/></svg><span class="c t">Do Stuff</span><span class="c ty">doc</span><span class="c sz">128 KB</span><span class="c fv">1.0</span><span class="c pb">Admin Admin</span><span class="c po">06/03/2011 11:09:20</span><span class="c ci">INW2</span></div>
<div class="row" style="top:227.68px"><svg class="ic db" viewBox="0 0 13 13"><use href="#i-db"/></svg><svg class="ic fi" viewBox="0 0 13 13"><use href="#i-word"/></svg><span class="c t">Profcan-Propuesta Consultoría</span><span class="c ty">docx</span><span class="c sz">32 KB</span><span class="c fv">1.0</span><span class="c pb">System Admini...</span><span class="c po">09/06/2012 16:52:10</span><span class="c ci">2196</span></div>
<div class="row alt" style="top:245.95px"><svg class="ic db" viewBox="0 0 13 13"><use href="#i-db"/></svg><svg class="ic fi" viewBox="0 0 13 13"><use href="#i-pdf"/></svg><span class="c t">2009_05_12_18_13_41</span><span class="c ty">pdf</span><span class="c sz">311 KB</span><span class="c fv">1.0</span><span class="c pb">Admin Admin</span><span class="c po">15/02/2011 09:03:49</span><span class="c ci">INW2011232</span></div>
<div class="row" style="top:264.22px"><svg class="ic db" viewBox="0 0 13 13"><use href="#i-db"/></svg><svg class="ic fi" viewBox="0 0 13 13"><use href="#i-pdf"/></svg><span class="c t">10.1.1.35.6128</span><span class="c ty">pdf</span><span class="c sz">200 KB</span><span class="c fv">1.0</span><span class="c pb">System Admini...</span><span class="c po">16/06/2012 04:49:41</span><span class="c ci">2219</span></div>
<div class="row alt" style="top:282.49px"><svg class="ic db" viewBox="0 0 13 13"><use href="#i-db"/></svg><svg class="ic fi" viewBox="0 0 13 13"><use href="#i-pdf"/></svg><span class="c t">teste</span><span class="c ty">pdf</span><span class="c sz">2,669 KB</span><span class="c fv">1.0</span><span class="c pb">John Doe</span><span class="c po">19/01/2012 13:13:27</span><span class="c ci">1456/</span></div>
<div class="row" style="top:300.76px"><svg class="ic db" viewBox="0 0 13 13"><use href="#i-db"/></svg><svg class="ic fi" viewBox="0 0 13 13"><use href="#i-pdf"/></svg><span class="c t">10717208-Sep-2011</span><span class="c ty">pdf</span><span class="c sz">498 KB</span><span class="c fv">1.0</span><span class="c pb">System Admini...</span><span class="c po">18/06/2012 03:07:09</span><span class="c ci">2222</span></div>
<div class="row alt" style="top:319.03px"><svg class="ic db" viewBox="0 0 13 13"><use href="#i-db"/></svg><svg class="ic fi" viewBox="0 0 13 13"><use href="#i-pdf"/></svg><span class="c t">211Principali_modifiche_bozza_modell...</span><span class="c ty">pdf</span><span class="c sz">99 KB</span><span class="c fv">1.0</span><span class="c pb">Admin Admin</span><span class="c po">15/02/2011 09:03:49</span><span class="c ci">INW2011234</span></div>
<div class="row alt" style="top:337.30px;height:4.6px;overflow:hidden;border-bottom:none"><svg class="ic db" viewBox="0 0 13 13"><use href="#i-db"/></svg><svg class="ic fi" viewBox="0 0 13 13"><use href="#i-pdf"/></svg></div>
<div class="a" style="left:243.4px;top:133.6px;width:777px;height:209px;border:1px solid #a9abb5;border-top:none;pointer-events:none"></div>
<div class="a" style="left:1006.8px;top:155px;width:13px;height:186.6px;background:#efefef"></div>
<div class="a" style="left:1007.3px;top:169px;width:11.6px;height:17px;background:#c6c6c6"></div>
<svg class="a" style="left:1009.4px;top:160.4px" width="8" height="5" viewBox="0 0 8 5"><path d="M1 4l3-3 3 3" fill="none" stroke="#3a3a3a" stroke-width="1.700"/></svg>
<svg class="a" style="left:1009.4px;top:332px" width="8" height="5" viewBox="0 0 8 5"><path d="M1 1l3 3 3-3" fill="none" stroke="#3a3a3a" stroke-width="1.700"/></svg>

<!-- BOTTOM -->
<div class="bt on" style="left:247.8px">Properties</div>
<div class="bt" style="left:315.7px">Ext. Properties</div>
<div class="bt" style="left:383.5px">Versions</div>
<div class="bt" style="left:451.4px">Preview</div>
<div class="bt" style="left:519.2px">Links</div>
<div class="bt" style="left:587.1px">History</div>
<div class="bt" style="left:655.0px">Notes</div>
<div class="bt" style="left:722.8px">Publishing</div>
<div class="bt" style="left:790.7px">Calendar</div>
<div class="bt" style="left:858.5px">Subscriptions</div>
<div id="bpane" class="a"></div>
<div class="fl v" style="left:243.60000000000002px;top:378.0px">ID :</div>
<div class="fv2 v" style="left:337.2px;top:378.0px">1304 (1304/)</div>
<div class="fl v" style="left:243.60000000000002px;top:396.7px"><b>Title :</b></div>
<div class="fl v" style="left:243.60000000000002px;top:415.1px">File :</div>
<div class="fv2 v" style="left:337.2px;top:415.1px">30115 inv.pdf</div>
<div class="fl v" style="left:243.60000000000002px;top:430.8px">Folder :</div>
<div class="fv2 v" style="left:337.2px;top:430.8px"><a>/Default</a></div>
<div class="fl v" style="left:243.60000000000002px;top:446.4px">Size :</div>
<div class="fv2 v" style="left:337.2px;top:446.4px">14.2 KB (14,540 bytes)</div>
<div class="fl v" style="left:243.60000000000002px;top:462.1px">File version :</div>
<div class="fv2 v" style="left:337.2px;top:462.1px">1.0 (1.3)</div>
<div class="fl v" style="left:243.60000000000002px;top:477.7px">Workflow Status :</div>
<div class="fv2 v" style="left:337.2px;top:477.7px">The End</div>
<div class="fl v" style="left:243.60000000000002px;top:493.4px">Created on :</div>
<div class="fv2 v" style="left:337.2px;top:493.4px">05/12/2011 10:39:13 By John Bravo</div>
<div class="fl v" style="left:243.60000000000002px;top:509.1px">Published on :</div>
<div class="fv2 v" style="left:337.2px;top:509.1px">05/12/2011 10:39:13 By John Bravo</div>
<div class="fl v" style="left:243.60000000000002px;top:524.8px">Permalink :</div>
<div class="fv2 v" style="left:337.2px;top:524.8px"><a>Download</a> | <a>Details</a></div>
<div class="inp" style="left:337px;top:391.3px;width:204px;height:18.4px"><span class="v" style="position:absolute;left:1.4px;top:4.8px;font-size:9.65px">30115 inv</span></div>
<div class="fl v" style="left:518.4px;top:378.8px">Vote :</div>
<div class="fl v" style="left:518.4px;top:398.6px">Language :</div>
<div class="fl v" style="left:518.4px;top:423.0px">Tag :</div>
<div class="fl v" style="left:518.4px;top:447.4px">New tag :</div>
<svg class="ic " style="left:614.6px;top:377px;width:12px;height:12px" viewBox="0 0 13 13"><use href="#i-star"/></svg>
<svg class="ic " style="left:629.1px;top:377px;width:12px;height:12px" viewBox="0 0 13 13"><use href="#i-star"/></svg>
<svg class="ic " style="left:643.7px;top:377px;width:12px;height:12px" viewBox="0 0 13 13"><use href="#i-star"/></svg>
<svg class="ic " style="left:658.2px;top:377px;width:12px;height:12px" viewBox="0 0 13 13"><use href="#i-star"/></svg>
<svg class="ic " style="left:672.8px;top:377px;width:12px;height:12px" viewBox="0 0 13 13"><use href="#i-star"/></svg>
<div class="inp" style="left:612.4px;top:394px;width:120.4px;height:18px"><span class="v" style="position:absolute;left:1.2px;top:4.4px;color:#111;font-size:9.4px">English</span><i style="position:absolute;left:105.2px;top:0;bottom:0;width:1px;background:#d8d8d8"></i><svg class="a" style="left:109.39999999999999px;top:6.7px;" width="6.6" height="3.7" viewBox="0 0 10 10" preserveAspectRatio="none"><path d="M0 0h10L5 10z" fill="#3a3a3a"/></svg></div>
<div class="a" style="left:612.2px;top:415.6px;width:46.4px;height:23px;border:1px solid #9c9c9c;border-radius:2.5px;background:linear-gradient(#fbfbfb,#f0f0f0)"><span style="position:absolute;left:3.8px;top:6.4px;font-size:8.9px">2011</span></div>
<svg class="ic " style="left:641px;top:421.4px;width:11.8px;height:11.8px" viewBox="0 0 13 13"><use href="#i-close"/></svg>
<div class="inp" style="left:658.8px;top:416.4px;width:108.6px;height:17px"><span class="v" style="position:absolute;left:2px;top:3.6px;color:#8a8a8a;font-size:9.55px">Enter values</span><i style="position:absolute;left:93.39999999999999px;top:0;bottom:0;width:1px;background:#d8d8d8"></i><svg class="a" style="left:97.59999999999998px;top:6.2px;" width="6.6" height="3.7" viewBox="0 0 10 10" preserveAspectRatio="none"><path d="M0 0h10L5 10z" fill="#3a3a3a"/></svg></div>
<div class="inp" style="left:612.4px;top:442.2px;width:120.4px;height:17.6px"></div>
<svg class="ic " style="left:1003px;top:374.8px;width:12.4px;height:12.4px" viewBox="0 0 13 13"><use href="#i-close"/></svg>
<svg class="a" style="left:870px;top:370px" width="150" height="165" viewBox="0 0 150 165" font-family="Liberation Sans, sans-serif" fill="#333">
<text x="25.48" y="13.85" font-size="2.2" textLength="8.3" lengthAdjust="spacingAndGlyphs" fill="#444">User ID</text>
<text x="44.32" y="13.85" font-size="2.2" textLength="10.5" lengthAdjust="spacingAndGlyphs" fill="#444">am. mgm</text>
<rect x="81.16" y="8.31" width="46.26" height="13.3" fill="#f4f4f4" stroke="#444" stroke-width=".55" />
<rect x="81.16" y="8.31" width="22.16" height="13.3" fill="#8a8a8a"/>
<rect x="103.32" y="12.74" width="24.1" height="4.43" fill="#b5b5b5"/>
<path d="M81.16 12.74H127.42" stroke="#444" stroke-width=".55" fill="none"/>
<path d="M81.16 17.17H127.42" stroke="#444" stroke-width=".55" fill="none"/>
<path d="M103.32 8.31V21.61" stroke="#444" stroke-width=".55" fill="none"/>
<text x="82.27" y="11.63" font-size="2" textLength="10" lengthAdjust="spacingAndGlyphs" fill="#222">Approval</text>
<text x="82.27" y="16.07" font-size="2" textLength="20" lengthAdjust="spacingAndGlyphs" fill="#111">Purchase Order No.</text>
<text x="104.71" y="16.07" font-size="2" textLength="10" lengthAdjust="spacingAndGlyphs" fill="#111">PO12345</text>
<text x="82.27" y="20.5" font-size="2" textLength="5" lengthAdjust="spacingAndGlyphs" fill="#222">Date</text>
<text x="12.19" y="27.42" font-size="2" textLength="7" lengthAdjust="spacingAndGlyphs" fill="#444">Vendor</text>
<rect x="11.08" y="28.53" width="48.48" height="12.47" fill="#fbfbfb" stroke="#555" stroke-width=".5"/>
<text x="12.74" y="31.58" font-size="2" textLength="27" lengthAdjust="spacingAndGlyphs" fill="#444">BLAKE AUTO SERVICE, INC.</text>
<text x="12.74" y="34.35" font-size="2" textLength="20" lengthAdjust="spacingAndGlyphs" fill="#444">1700 MILFORD LANE</text>
<text x="12.74" y="37.12" font-size="2" textLength="24" lengthAdjust="spacingAndGlyphs" fill="#444">CHIPS CREEK, FL   33884</text>
<text x="77.29" y="27.42" font-size="2" textLength="8" lengthAdjust="spacingAndGlyphs" fill="#444">Ship To</text>
<rect x="76.73" y="28.53" width="47.92" height="17.17" fill="#fbfbfb" stroke="#555" stroke-width=".5"/>
<text x="78.12" y="31.3" font-size="1.9" textLength="32" lengthAdjust="spacingAndGlyphs" fill="#444">A. Datum Accounting Company</text>
<text x="78.12" y="33.85" font-size="1.9" textLength="24" lengthAdjust="spacingAndGlyphs" fill="#444">Jake Dawn Street West</text>
<text x="78.12" y="36.4" font-size="1.9" textLength="36" lengthAdjust="spacingAndGlyphs" fill="#444">Fort Myers          FL     33919</text>
<text x="78.12" y="38.95" font-size="1.9" textLength="38" lengthAdjust="spacingAndGlyphs" fill="#444">Phone     (239) 555-0117  Ext. 5555</text>
<text x="78.12" y="41.5" font-size="1.9" textLength="26" lengthAdjust="spacingAndGlyphs" fill="#444">Fax        (239) 555-0118</text>
<text x="78.12" y="44.04" font-size="1.9" textLength="24" lengthAdjust="spacingAndGlyphs" fill="#444">Cell Ph.   787-0054275</text>
<text x="71.47" y="47.65" font-size="1.8" textLength="8" lengthAdjust="spacingAndGlyphs" fill="#444">GL Code</text>
<text x="8.31" y="53.74" font-size="1.8" textLength="26" lengthAdjust="spacingAndGlyphs" fill="#444">Invoice Detail and Payment Terms</text>
<rect x="7.76" y="54.57" width="119.67" height="88.09" fill="#fdfdfd" stroke="#333" stroke-width=".6"/>
<rect x="7.76" y="54.57" width="119.67" height="3.05" fill="#999"/>
<rect x="7.76" y="58.73" width="119.67" height="2.77" fill="#bdbdbd"/>
<path d="M7.76 57.62H127.42" stroke="#444" stroke-width=".4"/>
<path d="M7.76 58.73H127.42" stroke="#444" stroke-width=".4"/>
<path d="M7.76 61.5H127.42" stroke="#444" stroke-width=".4"/>
<path d="M40.17 54.57V57.62" stroke="#333" stroke-width=".5"/>
<path d="M70.64 54.57V57.62" stroke="#333" stroke-width=".5"/>
<path d="M101.11 54.57V57.62" stroke="#333" stroke-width=".5"/>
<path d="M42.94 58.73V142.66" stroke="#333" stroke-width=".55"/>
<path d="M76.18 58.73V142.66" stroke="#333" stroke-width=".55"/>
<path d="M89.2 58.73V142.66" stroke="#333" stroke-width=".55"/>
<path d="M97.51 58.73V142.66" stroke="#333" stroke-width=".55"/>
<path d="M103.88 58.73V142.66" stroke="#333" stroke-width=".55"/>
<path d="M114.96 58.73V142.66" stroke="#333" stroke-width=".55"/>
<text x="8.59" y="57.06" font-size="1.9" textLength="14" lengthAdjust="spacingAndGlyphs" fill="#111">Invoice Method</text>
<text x="41.0" y="57.06" font-size="1.9" textLength="5" lengthAdjust="spacingAndGlyphs" fill="#111">Date</text>
<text x="71.47" y="57.06" font-size="1.9" textLength="12" lengthAdjust="spacingAndGlyphs" fill="#111">Terms & FOB</text>
<text x="101.94" y="57.06" font-size="1.9" textLength="5" lengthAdjust="spacingAndGlyphs" fill="#111">Class</text>
<text x="8.59" y="60.94" font-size="1.9" textLength="22" lengthAdjust="spacingAndGlyphs" fill="#111">LN  Item  Description</text>
<text x="43.77" y="60.94" font-size="1.9" textLength="27" lengthAdjust="spacingAndGlyphs" fill="#111">Spec. Instr. / Vendor Part No.</text>
<text x="77.01" y="60.94" font-size="1.9" textLength="9" lengthAdjust="spacingAndGlyphs" fill="#111">Req. Date</text>
<text x="90.03" y="60.94" font-size="1.9" textLength="4.5" lengthAdjust="spacingAndGlyphs" fill="#111">UOM</text>
<text x="97.78" y="60.94" font-size="1.9" textLength="5.6" lengthAdjust="spacingAndGlyphs" fill="#111">Ordered</text>
<text x="104.43" y="60.94" font-size="1.9" textLength="9" lengthAdjust="spacingAndGlyphs" fill="#111">Unit Price</text>
<text x="115.79" y="60.94" font-size="1.9" textLength="9" lengthAdjust="spacingAndGlyphs" fill="#111">Ext. Price</text>
<text x="9.14" y="63.43" font-size="1.9" textLength="16.0" lengthAdjust="spacingAndGlyphs" fill="#444">1  BRAKE PADS 01</text>
<text x="77.29" y="63.43" font-size="1.9" textLength="8" lengthAdjust="spacingAndGlyphs" fill="#444">02/03/11</text>
<text x="90.3" y="63.43" font-size="1.9" textLength="4.5" lengthAdjust="spacingAndGlyphs" fill="#444">Each</text>
<text x="108.59" y="63.43" font-size="1.9" textLength="6" lengthAdjust="spacingAndGlyphs" fill="#444">84.27</text>
<text x="120.78" y="63.43" font-size="1.9" textLength="6.4" lengthAdjust="spacingAndGlyphs" fill="#444">252.81</text>
<path d="M7.76 64.27H127.42" stroke="#ddd" stroke-width=".3"/>
<text x="9.14" y="68.14" font-size="1.9" textLength="13.0" lengthAdjust="spacingAndGlyphs" fill="#444">2  MIRROR HUB</text>
<text x="77.29" y="68.14" font-size="1.9" textLength="8" lengthAdjust="spacingAndGlyphs" fill="#444">02/03/11</text>
<text x="90.3" y="68.14" font-size="1.9" textLength="4.5" lengthAdjust="spacingAndGlyphs" fill="#444">Each</text>
<text x="108.59" y="68.14" font-size="1.9" textLength="6" lengthAdjust="spacingAndGlyphs" fill="#444">84.27</text>
<text x="120.78" y="68.14" font-size="1.9" textLength="6.4" lengthAdjust="spacingAndGlyphs" fill="#444">168.54</text>
<path d="M7.76 68.98H127.42" stroke="#ddd" stroke-width=".3"/>
<text x="9.14" y="73.68" font-size="1.9" textLength="16.0" lengthAdjust="spacingAndGlyphs" fill="#444">3  AUTO SUPPLIES</text>
<text x="77.29" y="73.68" font-size="1.9" textLength="8" lengthAdjust="spacingAndGlyphs" fill="#444">02/03/11</text>
<text x="90.3" y="73.68" font-size="1.9" textLength="4.5" lengthAdjust="spacingAndGlyphs" fill="#444">Each</text>
<text x="108.59" y="73.68" font-size="1.9" textLength="6" lengthAdjust="spacingAndGlyphs" fill="#444">34.91</text>
<text x="120.78" y="73.68" font-size="1.9" textLength="6.4" lengthAdjust="spacingAndGlyphs" fill="#444">34.91</text>
<path d="M7.76 74.52H127.42" stroke="#ddd" stroke-width=".3"/>
<text x="9.14" y="78.39" font-size="1.9" textLength="8.0" lengthAdjust="spacingAndGlyphs" fill="#444">4  LABOR</text>
<text x="77.29" y="78.39" font-size="1.9" textLength="8" lengthAdjust="spacingAndGlyphs" fill="#444">02/03/11</text>
<text x="90.3" y="78.39" font-size="1.9" textLength="4.5" lengthAdjust="spacingAndGlyphs" fill="#444">Hour</text>
<text x="108.59" y="78.39" font-size="1.9" textLength="6" lengthAdjust="spacingAndGlyphs" fill="#444">1,670.44</text>
<text x="120.78" y="78.39" font-size="1.9" textLength="6.4" lengthAdjust="spacingAndGlyphs" fill="#444">3,340.88</text>
<path d="M7.76 79.22H127.42" stroke="#ddd" stroke-width=".3"/>
<text x="44.32" y="65.93" font-size="1.8" textLength="13.299999999999999" lengthAdjust="spacingAndGlyphs" fill="#444">BRAKES CONTROL</text>
<text x="44.32" y="73.13" font-size="1.8" textLength="9.5" lengthAdjust="spacingAndGlyphs" fill="#444">HYDRAULICS</text>
<text x="44.32" y="75.9" font-size="1.8" textLength="12.35" lengthAdjust="spacingAndGlyphs" fill="#444">AUTO SUPPLIES</text>
<text x="44.32" y="78.39" font-size="1.8" textLength="3.8" lengthAdjust="spacingAndGlyphs" fill="#444">mhrs</text>
<text x="44.32" y="80.61" font-size="1.8" textLength="4.75" lengthAdjust="spacingAndGlyphs" fill="#444">19874</text>
<rect x="87.26" y="142.66" width="40.17" height="15.24" fill="#f3f3f3" stroke="#333" stroke-width=".55"/>
<rect x="87.26" y="142.66" width="18.84" height="15.24" fill="#777"/>
<path d="M87.26 145.71H127.42" stroke="#333" stroke-width=".45"/>
<path d="M87.26 148.75H127.42" stroke="#333" stroke-width=".45"/>
<path d="M87.26 151.8H127.42" stroke="#333" stroke-width=".45"/>
<path d="M87.26 154.85H127.42" stroke="#333" stroke-width=".45"/>
<text x="88.37" y="145.15" font-size="1.9" textLength="8.0" lengthAdjust="spacingAndGlyphs" fill="#fff">Subtotal</text>
<text x="119.67" y="145.15" font-size="1.9" textLength="7.2" lengthAdjust="spacingAndGlyphs" fill="#222">3,797.14</text>
<text x="88.37" y="148.2" font-size="1.9" textLength="9.0" lengthAdjust="spacingAndGlyphs" fill="#fff">Sales Tax</text>
<text x="119.67" y="148.2" font-size="1.9" textLength="3.6" lengthAdjust="spacingAndGlyphs" fill="#222">0.00</text>
<text x="88.37" y="151.25" font-size="1.9" textLength="8.0" lengthAdjust="spacingAndGlyphs" fill="#fff">Shipping</text>
<text x="119.67" y="151.25" font-size="1.9" textLength="3.6" lengthAdjust="spacingAndGlyphs" fill="#222">0.00</text>
<text x="88.37" y="154.29" font-size="1.9" textLength="5.0" lengthAdjust="spacingAndGlyphs" fill="#fff">Other</text>
<text x="119.67" y="154.29" font-size="1.9" textLength="3.6" lengthAdjust="spacingAndGlyphs" fill="#222">0.00</text>
<text x="88.37" y="157.34" font-size="1.9" textLength="11.0" lengthAdjust="spacingAndGlyphs" fill="#fff">Grand Total</text>
<text x="119.67" y="157.34" font-size="1.9" textLength="7.2" lengthAdjust="spacingAndGlyphs" fill="#222">3,797.14</text>
</svg>

<!-- STATUS -->
<div id="status" class="a"></div>
<svg class="a" style="left:1px;top:581px" width="13.800" height="14.400" viewBox="0 0 13 13"><path d="M2.600 1.200h8.600l-1.200 1.800v8.400H1.400l1.200-1.800z" fill="#d9ecfb" stroke="#5e96dd" stroke-width=".9"/><path d="M10.200 3l1.800-1.800" stroke="#5e96dd" stroke-width="1"/><path d="M1.200 11.600h8.600" stroke="#4a82cf" stroke-width="1.200"/><path d="M4 4.600l3.400 2M4 6.800l3.400 2M4.600 3.600l2.200 1.300" stroke="#8ec3ee" stroke-width=".9"/></svg>
<svg class="a" style="left:846.8px;top:579.8px" width="13.2" height="13.8" viewBox="0 0 13 13"><rect x=".8" y="1.800" width="8.600" height="10.600" rx="1" fill="#c98a3f" stroke="#a56a25" stroke-width=".6"/><rect x="3" y=".6" width="4.200" height="2.400" rx=".6" fill="#8a8a8a"/><rect x="5.400" y="5" width="6.600" height="7.600" fill="#fdfdfd" stroke="#bcbcbc" stroke-width=".6"/><rect x="3.800" y="3.600" width="4.600" height="6" fill="#f4f4f4" stroke="#c8c8c8" stroke-width=".5"/></svg>
<svg class="a" style="left:877.4px;top:580.4px" width="13" height="13.4" viewBox="0 0 13 13"><use href="#page"/><rect x="5.200" y="7.800" width="6.800" height="4.800" rx=".6" fill="#f0a832" stroke="#c98318" stroke-width=".5"/><path d="M6.600 7.800V6.400a2 2 0 0 1 4 0v1.400" fill="none" stroke="#b9b9b9" stroke-width="1"/></svg>
<svg class="a" style="left:907.2px;top:580.4px" width="13.2" height="13.4" viewBox="0 0 13 13"><use href="#t-docedit"/></svg>
<svg class="a" style="left:936px;top:582px" width="13.8" height="9.6" viewBox="0 0 13.8 9.600"><rect x=".6" y=".6" width="12.600" height="8.400" fill="#f4f9ff" stroke="#5a8fdc" stroke-width="1"/><path d="M.8.800l6.100 4.600L13 .8M.8 8.800l4.400-4M13 8.800l-4.400-4" fill="none" stroke="#7aa8e6" stroke-width=".8"/></svg>
<svg class="a" style="left:967px;top:580.8px" width="12" height="12.4" viewBox="0 0 12 12.400"><rect x=".6" y=".8" width="10.800" height="10.800" fill="#f7fafe" stroke="#6f9fe0" stroke-width=".9"/><rect x=".6" y=".8" width="10.800" height="2.400" fill="#f08a3a"/><rect x="2.400" y="4.800" width="3" height="2.600" fill="#5fb04a"/><rect x="6.400" y="4.800" width="3" height="2.600" fill="#5fb04a"/><rect x="2.400" y="8.200" width="3" height="2.200" fill="#9ec0ee"/><rect x="6.400" y="8.200" width="3" height="2.200" fill="#5fb04a"/></svg>
<svg class="a" style="left:996.4px;top:580.4px" width="13" height="13.4" viewBox="0 0 13 13"><path d="M6.500 1l1 .1.400 1.400 1 .5 1.300-.7 1.300 1.400-.7 1.300.4 1 1.400.4v1.900l-1.400.4-.4 1 .7 1.300-1.400 1.300-1.200-.7-1 .4-.4 1.400H5.500l-.4-1.400-1-.4-1.300.7-1.300-1.400.7-1.200-.5-1L.4 8.200V6.300l1.400-.4.400-1-.7-1.300 1.400-1.300 1.200.7 1-.5.500-1.400z" fill="#b5b5b5" stroke="#8f8f8f" stroke-width=".4"/><circle cx="6.500" cy="7.200" r="2.100" fill="#e6e6e6" stroke="#999" stroke-width=".4"/></svg>
<div class="sn" style="left:860.6px">0</div>
<div class="sn" style="left:890.6px">1</div>
<div class="sn" style="left:920px">11</div>
<div class="sn" style="left:949.8px">0</div>
<div class="sn" style="left:979.8px">0</div>
<div class="sn" style="left:1009.4px">0</div>
</body>
</html>
